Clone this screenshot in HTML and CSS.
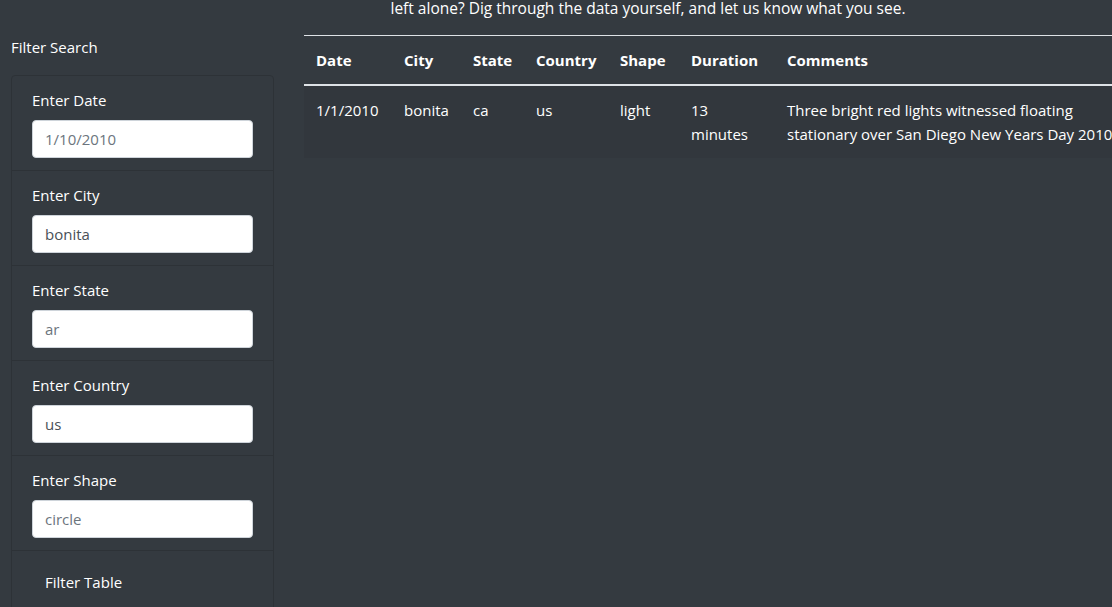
FILE: index.html
```html
<!DOCTYPE html>
<html lang="en">
<head>
  <meta charset="UTF-8">
  <meta name="viewport" content="width=device-width, initial-scale=1.0">
  <title>UFO Sightings</title>
  <link rel="stylesheet" href="styles.css">
</head>
<body>
  <div class="page">
    <aside class="side">
      <p class="side-title">Filter Search</p>
      <ul class="filters">
        <li class="filter">
          <label for="datetime">Enter Date</label>
          <input type="text" id="datetime" placeholder="1/10/2010">
        </li>
        <li class="filter">
          <label for="city">Enter City</label>
          <input type="text" id="city" value="bonita">
        </li>
        <li class="filter">
          <label for="state">Enter State</label>
          <input type="text" id="state" placeholder="ar">
        </li>
        <li class="filter">
          <label for="country">Enter Country</label>
          <input type="text" id="country" value="us">
        </li>
        <li class="filter">
          <label for="shape">Enter Shape</label>
          <input type="text" id="shape" placeholder="circle">
        </li>
        <li class="filter">
          <button id="filter-btn" type="button">Filter Table</button>
        </li>
      </ul>
    </aside>
    <main class="main">
      <p class="intro">left alone? Dig through the data yourself, and let us know what you see.</p>
      <table class="ufo">
        <colgroup>
          <col class="c-date">
          <col class="c-city">
          <col class="c-state">
          <col class="c-country">
          <col class="c-shape">
          <col class="c-dur">
          <col class="c-com">
        </colgroup>
        <thead>
          <tr>
            <th>Date</th>
            <th>City</th>
            <th>State</th>
            <th>Country</th>
            <th>Shape</th>
            <th>Duration</th>
            <th>Comments</th>
          </tr>
        </thead>
        <tbody>
          <tr>
            <td>1/1/2010</td>
            <td>bonita</td>
            <td>ca</td>
            <td>us</td>
            <td>light</td>
            <td>13 minutes</td>
            <td>Three bright red lights witnessed floating stationary over San Diego New Years Day 2010.</td>
          </tr>
        </tbody>
      </table>
    </main>
  </div>
</body>
</html>
```

FILE: styles.css
```css
*{
  margin: 0;
  padding: 0;
  box-sizing: border-box;
}
html, body{
  background-color: #343a40;
  overflow: hidden;
}
body{
  font-family: "Open Sans", "Liberation Sans", sans-serif;
  font-size: 15px;
  line-height: 24px;
  color: #fff;
}
.page{
  display: flex;
  align-items: flex-start;
  width: 1112px;
  height: 607px;
  overflow: hidden;
}
.side{
  flex: 0 0 263px;
  margin-left: 11px;
  padding-top: 35px;
}
.side .side-title{
  height: 40px;
}
.filters{
  list-style: none;
  border: 1px solid #2d3237;
  border-radius: 4px;
}
.filter{
  padding: 12px 20px;
  border-bottom: 1px solid #2d3237;
}
.filter label{
  display: block;
  margin-bottom: 8px;
}
.filter input{
  display: block;
  width: 100%;
  height: 38px;
  padding: 6px 12px;
  font: inherit;
  color: #495057;
  background-color: #fff;
  border: 1px solid #ced4da;
  border-radius: 4px;
  outline: none;
}
.filter input::placeholder{
  color: #6c757d;
}
.filter button{
  padding: 6px 12px;
  font: inherit;
  color: #fff;
  background: transparent;
  border: 1px solid transparent;
  border-radius: 4px;
}
.main{
  margin-left: 30px;
  flex: 0 0 auto;
}
.intro{
  width: 688px;
  height: 39px;
  margin-top: -4px;
  font-size: 15.5px;
  text-align: center;
}
.ufo{
  width: 835px;
  table-layout: fixed;
  border-collapse: collapse;
  color: #fff;
}
.ufo .c-date{ width: 88px; }
.ufo .c-city{ width: 69px; }
.ufo .c-state{ width: 63px; }
.ufo .c-country{ width: 84px; }
.ufo .c-shape{ width: 71px; }
.ufo .c-dur{ width: 96px; }
.ufo .c-com{ width: 364px; }
.ufo th, .ufo td{
  padding: 12px;
  text-align: left;
  vertical-align: top;
}
.ufo thead th{
  font-weight: 700;
  border-top: 1px solid #dee2e6;
  border-bottom: 2px solid #dee2e6;
}
.ufo tbody tr{
  background-color: #32373d;
}
```
